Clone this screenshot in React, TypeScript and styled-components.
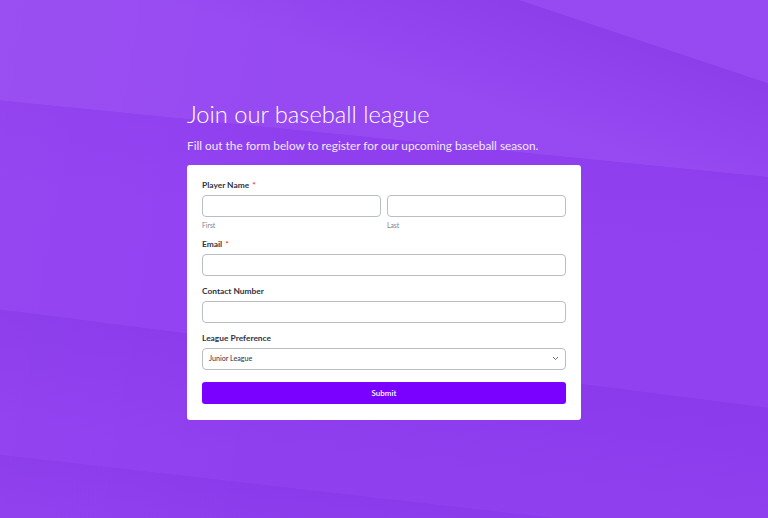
import React from "react";
import styled, { createGlobalStyle } from "styled-components";

const GlobalStyle = createGlobalStyle`
  html, body {
    margin: 0;
    padding: 0;
  }
  body {
    font-family: Lato, "Open Sans", "Liberation Sans", sans-serif;
  }
  * {
    box-sizing: border-box;
  }
`;

// soft diagonal bands laid over the purple base
const Page = styled.div`
  width: 100vw;
  height: 100vh;
  display: flex;
  align-items: center;
  justify-content: center;
  overflow: hidden;
  background:
    linear-gradient(198.5deg, rgba(255, 255, 255, 0) 10.7%, rgba(105, 25, 205, 0.22) 10.8%, rgba(105, 25, 205, 0) 26%),
    linear-gradient(185.7deg, rgba(255, 255, 255, 0.045) 0%, rgba(255, 255, 255, 0.045) 29.7%, rgba(105, 25, 205, 0.06) 29.8%, rgba(105, 25, 205, 0) 45%),
    linear-gradient(187.3deg, rgba(105, 25, 205, 0) 66.1%, rgba(105, 25, 205, 0.16) 66.2%, rgba(105, 25, 205, 0.04) 85%),
    linear-gradient(186.5deg, rgba(105, 25, 205, 0) 89.5%, rgba(105, 25, 205, 0.12) 89.6%, rgba(105, 25, 205, 0.02) 100%),
    linear-gradient(100deg, rgba(255, 255, 255, 0.03) 0%, rgba(255, 255, 255, 0) 40%),
    #9241f1;
`;

const Column = styled.div`
  width: 394px;
  display: flex;
  flex-direction: column;
`;

const Title = styled.h1`
  margin: 0 0 9px;
  color: #fff;
  font-size: 23.7px;
  font-weight: 300;
  line-height: 30px;
`;

const Subtitle = styled.p`
  margin: 0 0 11px;
  color: #f1e8ff;
  font-size: 11.8px;
  line-height: 16px;
`;

const Card = styled.form`
  background: #fff;
  border-radius: 3px;
  padding: 15px 15px 16px;
  display: flex;
  flex-direction: column;
`;

const Field = styled.div<{ $gap?: number }>`
  display: flex;
  flex-direction: column;
  margin-bottom: ${(p) => p.$gap ?? 10}px;
`;

const Label = styled.label`
  color: #2c3345;
  font-size: 8.4px;
  font-weight: 700;
  line-height: 11px;
  margin-bottom: 4px;
`;

const Star = styled.span`
  color: #f23a3c;
  margin-left: 3px;
`;

const Row = styled.div`
  display: grid;
  grid-template-columns: 1fr 1fr;
  gap: 6px;
`;

const Part = styled.div`
  display: flex;
  flex-direction: column;
`;

const Input = styled.input`
  height: 22px;
  width: 100%;
  border: 1px solid #b8bdc9;
  border-radius: 4px;
  background: #fff;
  outline: none;
`;

const Hint = styled.span`
  color: #7c818c;
  font-size: 6.8px;
  line-height: 10px;
  margin-top: 3px;
`;

const SelectBox = styled.div`
  height: 22px;
  border: 1px solid #b8bdc9;
  border-radius: 4px;
  display: flex;
  align-items: center;
  justify-content: space-between;
  padding: 0 6px 0 6px;
  color: #2c3345;
  font-size: 7.2px;
`;

const Submit = styled.button`
  height: 22px;
  border: none;
  border-radius: 3px;
  background: #7a00ff;
  color: #fff;
  font-family: inherit;
  font-size: 8px;
  font-weight: 600;
`;

export default function App() {
  return (
    <>
      <GlobalStyle />
      <Page>
        <Column>
          <Title>Join our baseball league</Title>
          <Subtitle>
            Fill out the form below to register for our upcoming baseball season.
          </Subtitle>
          <Card onSubmit={(e) => e.preventDefault()}>
            <Field $gap={9}>
              <Label>
                Player Name<Star>*</Star>
              </Label>
              <Row>
                <Part>
                  <Input />
                  <Hint>First</Hint>
                </Part>
                <Part>
                  <Input />
                  <Hint>Last</Hint>
                </Part>
              </Row>
            </Field>
            <Field>
              <Label>
                Email<Star>*</Star>
              </Label>
              <Input type="email" />
            </Field>
            <Field>
              <Label>Contact Number</Label>
              <Input type="tel" />
            </Field>
            <Field $gap={12}>
              <Label>League Preference</Label>
              <SelectBox>
                <span>Junior League</span>
                <svg width="7" height="5" viewBox="0 0 7 5" fill="none">
                  <path d="M1 1l2.5 2.5L6 1" stroke="#6b7080" strokeWidth="1" />
                </svg>
              </SelectBox>
            </Field>
            <Submit type="submit">Submit</Submit>
          </Card>
        </Column>
      </Page>
    </>
  );
}
